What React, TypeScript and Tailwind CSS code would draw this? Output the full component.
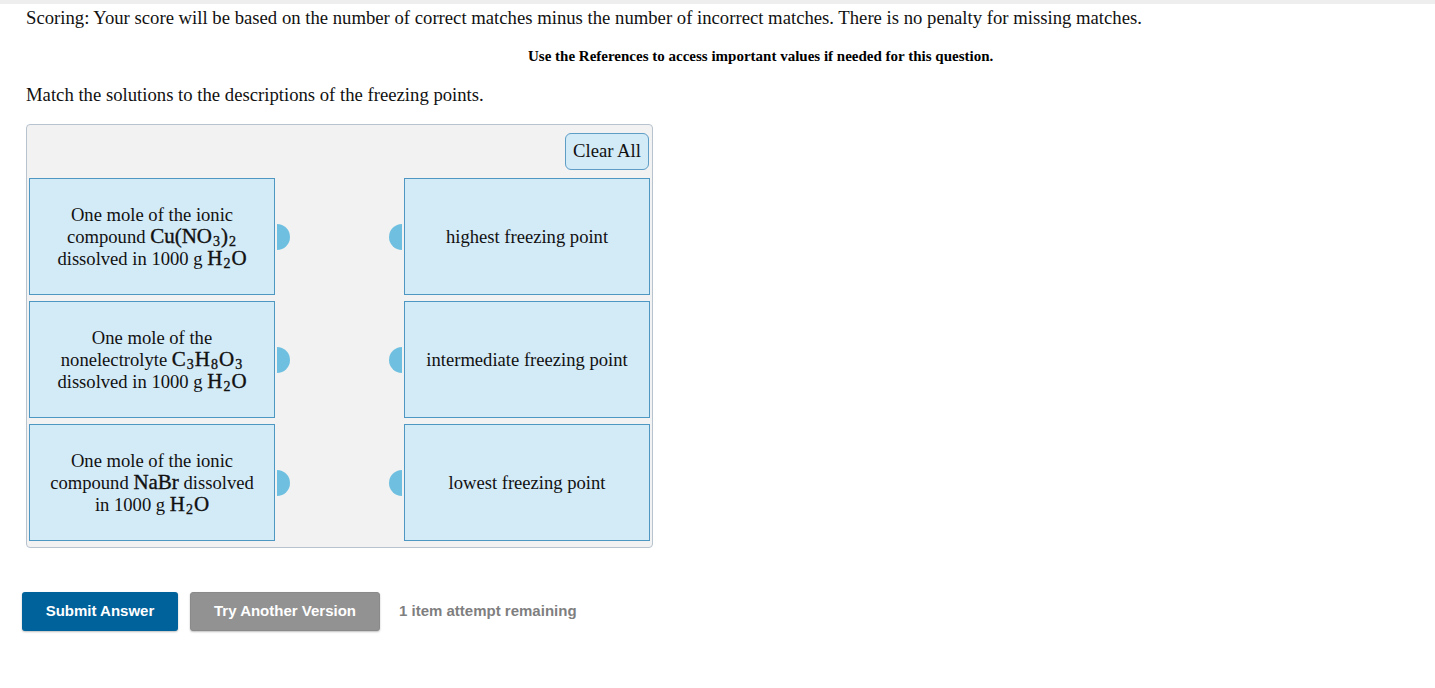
import type { ReactNode } from 'react'

const serif = "font-['Liberation_Serif','Times_New_Roman',serif]"
const sans = "font-['Liberation_Sans',Arial,sans-serif]"

// formula bits use a larger, slightly heavier face, like the math font in the original
function F({ children }: { children: ReactNode }) {
    return <span className="text-[21px] leading-[20px] [-webkit-text-stroke:0.35px_#111]">{children}</span>
}

function Sub({ children }: { children: ReactNode }) {
    return <span className="text-[14px] leading-[10px] align-[-3px] px-[1px]">{children}</span>
}

const solutions: ReactNode[] = [
    <>
        One mole of the ionic<br />
        compound <F>Cu(NO<Sub>3</Sub>)<Sub>2</Sub></F><br />
        dissolved in 1000 g <F>H<Sub>2</Sub>O</F>
    </>,
    <>
        One mole of the<br />
        nonelectrolyte <F>C<Sub>3</Sub>H<Sub>8</Sub>O<Sub>3</Sub></F><br />
        dissolved in 1000 g <F>H<Sub>2</Sub>O</F>
    </>,
    <>
        One mole of the ionic<br />
        compound <F>NaBr</F> dissolved<br />
        in 1000 g <F>H<Sub>2</Sub>O</F>
    </>,
]

const descriptions = ['highest freezing point', 'intermediate freezing point', 'lowest freezing point']

export default function App() {
    return (
        <div className={`min-h-screen bg-white text-black ${serif}`}>
            <div className="h-[4px] bg-[#eeeeee]" />

            <div className="pl-[26px]">
                <p className="mt-[3px] text-[18.7px] leading-[22px] text-[#111]">
                    Scoring: Your score will be based on the number of correct matches minus the number of incorrect matches. There is no penalty for missing matches.
                </p>

                <p className="mt-[18px] pl-[502px] text-[15px] leading-[18px] font-bold">
                    Use the References to access important values if needed for this question.
                </p>

                <p className="mt-[19px] text-[18.7px] leading-[22px] text-[#111]">
                    Match the solutions to the descriptions of the freezing points.
                </p>

                {/* matching panel */}
                <div className="mt-[18px] w-[627px] border border-[#b7c3cf] rounded-[4px] bg-[#f2f2f2] px-[2px] pt-[8px] pb-[6px]">
                    <div className="flex justify-end pr-[1px]">
                        <button className="h-[37px] w-[84px] rounded-[6px] border border-[#5d9dc6] bg-[#d3eaf7] text-[18.7px] text-[#111]">
                            Clear All
                        </button>
                    </div>

                    <div className="mt-[8px] flex flex-col gap-[6px]">
                        {solutions.map((sol, i) => (
                            <div key={i} className="flex items-center justify-between">
                                <div className="flex items-center gap-[2px]">
                                    <div className="w-[246px] h-[117px] border border-[#4f97c3] bg-[#d3eaf7] flex items-center justify-center text-center text-[18.6px] leading-[22px] text-[#111]">
                                        <div>{sol}</div>
                                    </div>
                                    <div className="w-[13px] h-[26px] rounded-r-full bg-[#6fc0e0]" />
                                </div>
                                <div className="flex items-center gap-[2px]">
                                    <div className="w-[13px] h-[26px] rounded-l-full bg-[#6fc0e0]" />
                                    <div className="w-[246px] h-[117px] border border-[#4f97c3] bg-[#d3eaf7] flex items-center justify-center text-center text-[18.6px] leading-[22px] text-[#111]">
                                        {descriptions[i]}
                                    </div>
                                </div>
                            </div>
                        ))}
                    </div>
                </div>
            </div>

            <div className={`mt-[44px] pl-[22px] flex items-center ${sans}`}>
                <button className="h-[39px] w-[156px] rounded-[3px] bg-[#00629b] text-white text-[15px] font-bold shadow-[0_1px_2px_rgba(0,0,0,0.25)]">
                    Submit Answer
                </button>
                <button className="ml-[12px] h-[39px] w-[190px] rounded-[3px] bg-[#929292] border border-[#8a8a8a] text-white text-[15px] font-bold shadow-[0_1px_2px_rgba(0,0,0,0.25)]">
                    Try Another Version
                </button>
                <span className="ml-[19px] text-[15px] font-bold text-[#7f7f7f]">1 item attempt remaining</span>
            </div>
        </div>
    )
}
